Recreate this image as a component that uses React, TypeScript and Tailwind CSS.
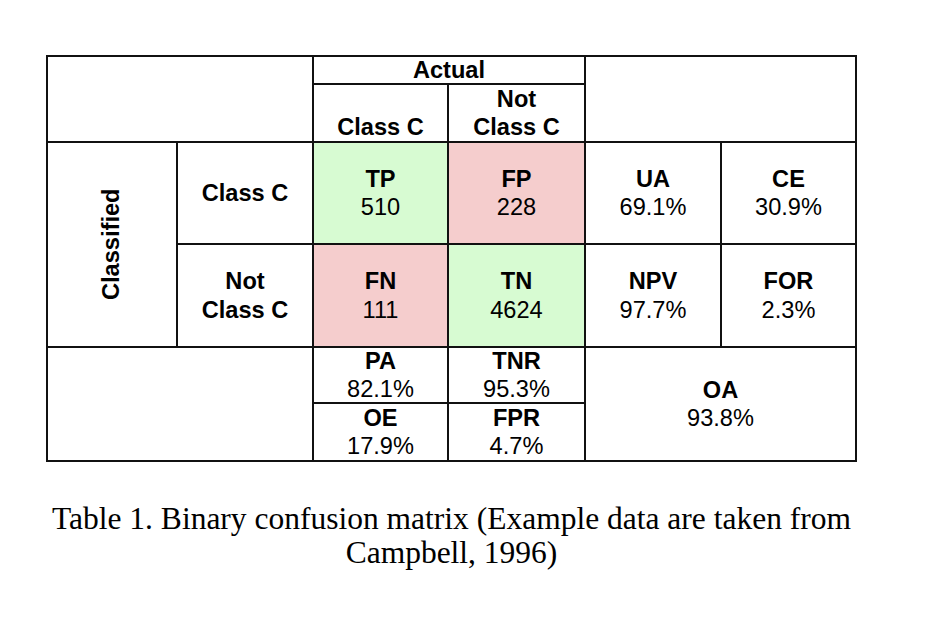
import React from "react";

const Cell = ({
  label,
  value,
  className = "",
}: {
  label: string;
  value?: string;
  className?: string;
}) => (
  <div className={`flex flex-col items-center justify-center text-center ${className}`}>
    <span className="font-bold">{label}</span>
    {value && <span>{value}</span>}
  </div>
);

export default function App() {
  return (
    <div className="w-[926px] h-[622px] bg-white font-['Liberation_Sans',Arial,sans-serif] text-black">
      <div className="pl-[46px] pt-[55px] w-[857px]">
        <div className="grid grid-cols-[128px_134px_133px_135px_134px_133px] grid-rows-[26px_56px_100px_101px_54px_56px] gap-[2px] p-[2px] bg-[#111] text-[23.6px] leading-[28.5px]">
          {/* top-left empty */}
          <div className="col-start-1 col-span-2 row-start-1 row-span-2 bg-white" />
          {/* Actual */}
          <div className="col-start-3 col-span-2 row-start-1 bg-white flex items-center justify-center font-bold leading-[26px]">
            Actual
          </div>
          {/* top-right empty */}
          <div className="col-start-5 col-span-2 row-start-1 row-span-2 bg-white" />
          {/* column headers */}
          <div className="col-start-3 row-start-2 bg-white flex flex-col items-center justify-end font-bold leading-[28px]">
            Class C
          </div>
          <div className="col-start-4 row-start-2 bg-white flex flex-col items-center justify-end font-bold leading-[28px] text-center">
            <span>Not</span>
            <span>Class C</span>
          </div>
          {/* Classified */}
          <div className="col-start-1 row-start-3 row-span-2 bg-white flex items-center justify-center">
            <span className="-rotate-90 whitespace-nowrap font-bold">Classified</span>
          </div>
          {/* row headers */}
          <div className="col-start-2 row-start-3 bg-white flex items-center justify-center font-bold">
            Class C
          </div>
          <div className="col-start-2 row-start-4 bg-white flex flex-col items-center justify-center font-bold">
            <span>Not</span>
            <span>Class C</span>
          </div>
          {/* matrix */}
          <Cell label="TP" value="510" className="col-start-3 row-start-3 bg-[#d7fbd2]" />
          <Cell label="FP" value="228" className="col-start-4 row-start-3 bg-[#f5cdcd]" />
          <Cell label="UA" value="69.1%" className="col-start-5 row-start-3 bg-white" />
          <Cell label="CE" value="30.9%" className="col-start-6 row-start-3 bg-white" />
          <Cell label="FN" value="111" className="col-start-3 row-start-4 bg-[#f5cdcd]" />
          <Cell label="TN" value="4624" className="col-start-4 row-start-4 bg-[#d7fbd2]" />
          <Cell label="NPV" value="97.7%" className="col-start-5 row-start-4 bg-white" />
          <Cell label="FOR" value="2.3%" className="col-start-6 row-start-4 bg-white" />
          {/* bottom-left empty */}
          <div className="col-start-1 col-span-2 row-start-5 row-span-2 bg-white" />
          <Cell label="PA" value="82.1%" className="col-start-3 row-start-5 bg-white" />
          <Cell label="TNR" value="95.3%" className="col-start-4 row-start-5 bg-white" />
          <Cell label="OE" value="17.9%" className="col-start-3 row-start-6 bg-white" />
          <Cell label="FPR" value="4.7%" className="col-start-4 row-start-6 bg-white" />
          <Cell label="OA" value="93.8%" className="col-start-5 col-span-2 row-start-5 row-span-2 bg-white" />
        </div>
        <div className="mt-[40px] text-center font-['Liberation_Serif','Times_New_Roman',serif] text-[31.5px] leading-[34px] whitespace-nowrap">
          <p>Table 1. Binary confusion matrix (Example data are taken from</p>
          <p>Campbell, 1996)</p>
        </div>
      </div>
    </div>
  );
}
